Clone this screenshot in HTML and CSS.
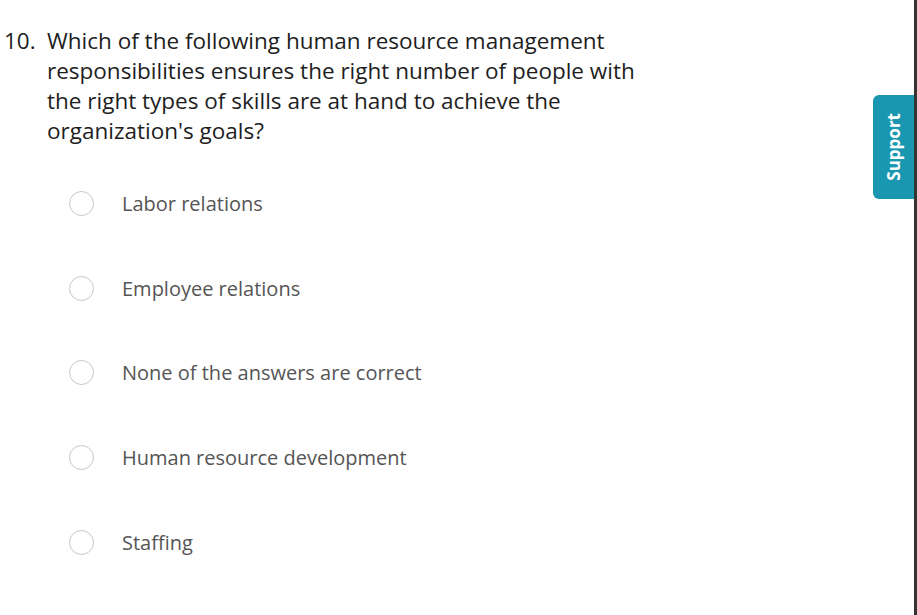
FILE: index.html
```html
<!DOCTYPE html>
<html lang="en">
<head>
    <meta charset="UTF-8">
    <meta name="viewport" content="width=device-width, initial-scale=1.0">
    <title>Quiz</title>
    <link rel="stylesheet" href="styles.css">
</head>
<body>
    <div class="quiz">
        <div class="question">
            <span class="num">10.</span>
            <p class="text">Which of the following human resource management responsibilities ensures the right number of people with the right types of skills are at hand to achieve the organization's goals?</p>
        </div>
        <ul class="answers">
            <li><label><input type="radio" name="q10"><span class="radio"></span>Labor relations</label></li>
            <li><label><input type="radio" name="q10"><span class="radio"></span>Employee relations</label></li>
            <li><label><input type="radio" name="q10"><span class="radio"></span>None of the answers are correct</label></li>
            <li><label><input type="radio" name="q10"><span class="radio"></span>Human resource development</label></li>
            <li><label><input type="radio" name="q10"><span class="radio"></span>Staffing</label></li>
        </ul>
    </div>

    <a class="support" href="#">Support</a>
    <div class="edge"></div>
</body>
</html>
```

FILE: styles.css
```css
* {
    box-sizing: border-box;
    margin: 0;
    padding: 0;
}

body {
    font-family: "Open Sans", Arial, sans-serif;
    background: #fff;
    color: #222;
}

.quiz {
    padding: 26px 0 0 4px;
}

.question {
    display: flex;
    font-size: 22.5px;
    line-height: 30px;
    color: #1e1e1e;
}

.num {
    width: 43px;
    flex-shrink: 0;
}

.text {
    max-width: 620px;
}

.answers {
    list-style: none;
    margin-top: 44px;
    padding-left: 65px;
}

.answers li {
    height: 84.7px;
}

.answers label {
    display: flex;
    align-items: center;
    font-size: 20px;
    color: #555;
    cursor: pointer;
}

.answers input {
    display: none;
}

.radio {
    width: 25px;
    height: 25px;
    border: 1px solid #c8c8c8;
    border-radius: 50%;
    margin-right: 28px;
}

.answers input:checked + .radio {
    border: 7px solid #1995ad;
}

/* side tab */
.support {
    position: fixed;
    top: 95px;
    right: 3px;
    width: 41px;
    height: 104px;
    background: #1a97b0;
    border-radius: 6px 0 0 6px;
    display: flex;
    align-items: center;
    justify-content: center;
    writing-mode: sideways-lr;
    color: #fff;
    font-size: 17px;
    font-weight: 700;
    text-decoration: none;
}

.edge {
    position: fixed;
    top: 0;
    right: 0;
    width: 3px;
    height: 100%;
    background: #333;
}
```
